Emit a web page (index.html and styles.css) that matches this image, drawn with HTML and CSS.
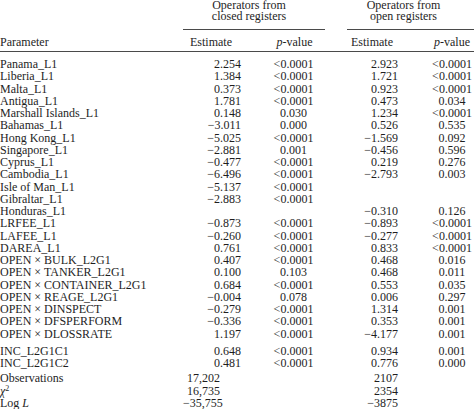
FILE: index.html
```html
<!DOCTYPE html>
<html>
<head>
<meta charset="utf-8">
<link rel="stylesheet" href="styles.css">
</head>
<body>
<table class="tbl">
  <colgroup>
    <col class="c-param"><col class="c-est1"><col class="c-p1"><col class="c-gap"><col class="c-est2"><col class="c-p2">
  </colgroup>
  <thead>
    <tr class="grp">
      <th></th>
      <th colspan="2" class="grp1">Operators from<br>closed registers</th>
      <th></th>
      <th colspan="2" class="grp2">Operators from<br>open registers</th>
    </tr>
    <tr class="sub">
      <th class="param">Parameter</th>
      <th class="h-e1">Estimate</th>
      <th class="h-p1"><i>p</i>-value</th>
      <th></th>
      <th class="h-e2">Estimate</th>
      <th class="h-p2"><i>p</i>-value</th>
    </tr>
  </thead>
  <tbody class="main">
    <tr class="first"><td>Panama_L1</td><td class="e1">2.254</td><td class="p1">&lt;0.0001</td><td></td><td class="e2">2.923</td><td class="p2">&lt;0.0001</td></tr>
    <tr><td>Liberia_L1</td><td class="e1">1.384</td><td class="p1">&lt;0.0001</td><td></td><td class="e2">1.721</td><td class="p2">&lt;0.0001</td></tr>
    <tr><td>Malta_L1</td><td class="e1">0.373</td><td class="p1">&lt;0.0001</td><td></td><td class="e2">0.923</td><td class="p2">&lt;0.0001</td></tr>
    <tr><td>Antigua_L1</td><td class="e1">1.781</td><td class="p1">&lt;0.0001</td><td></td><td class="e2">0.473</td><td class="p2">0.034</td></tr>
    <tr><td>Marshall Islands_L1</td><td class="e1">0.148</td><td class="p1">0.030</td><td></td><td class="e2">1.234</td><td class="p2">&lt;0.0001</td></tr>
    <tr><td>Bahamas_L1</td><td class="e1">−3.011</td><td class="p1">0.000</td><td></td><td class="e2">0.526</td><td class="p2">0.535</td></tr>
    <tr><td>Hong Kong_L1</td><td class="e1">−5.025</td><td class="p1">&lt;0.0001</td><td></td><td class="e2">−1.569</td><td class="p2">0.092</td></tr>
    <tr><td>Singapore_L1</td><td class="e1">−2.881</td><td class="p1">0.001</td><td></td><td class="e2">−0.456</td><td class="p2">0.596</td></tr>
    <tr><td>Cyprus_L1</td><td class="e1">−0.477</td><td class="p1">&lt;0.0001</td><td></td><td class="e2">0.219</td><td class="p2">0.276</td></tr>
    <tr><td>Cambodia_L1</td><td class="e1">−6.496</td><td class="p1">&lt;0.0001</td><td></td><td class="e2">−2.793</td><td class="p2">0.003</td></tr>
    <tr><td>Isle of Man_L1</td><td class="e1">−5.137</td><td class="p1">&lt;0.0001</td><td></td><td class="e2"></td><td class="p2"></td></tr>
    <tr><td>Gibraltar_L1</td><td class="e1">−2.883</td><td class="p1">&lt;0.0001</td><td></td><td class="e2"></td><td class="p2"></td></tr>
    <tr><td>Honduras_L1</td><td class="e1"></td><td class="p1"></td><td></td><td class="e2">−0.310</td><td class="p2">0.126</td></tr>
    <tr><td>LRFEE_L1</td><td class="e1">−0.873</td><td class="p1">&lt;0.0001</td><td></td><td class="e2">−0.893</td><td class="p2">&lt;0.0001</td></tr>
    <tr><td>LAFEE_L1</td><td class="e1">−0.260</td><td class="p1">&lt;0.0001</td><td></td><td class="e2">−0.277</td><td class="p2">&lt;0.0001</td></tr>
    <tr><td>DAREA_L1</td><td class="e1">0.761</td><td class="p1">&lt;0.0001</td><td></td><td class="e2">0.833</td><td class="p2">&lt;0.0001</td></tr>
    <tr><td>OPEN × BULK_L2G1</td><td class="e1">0.407</td><td class="p1">&lt;0.0001</td><td></td><td class="e2">0.468</td><td class="p2">0.016</td></tr>
    <tr><td>OPEN × TANKER_L2G1</td><td class="e1">0.100</td><td class="p1">0.103</td><td></td><td class="e2">0.468</td><td class="p2">0.011</td></tr>
    <tr><td>OPEN × CONTAINER_L2G1</td><td class="e1">0.684</td><td class="p1">&lt;0.0001</td><td></td><td class="e2">0.553</td><td class="p2">0.035</td></tr>
    <tr><td>OPEN × REAGE_L2G1</td><td class="e1">−0.004</td><td class="p1">0.078</td><td></td><td class="e2">0.006</td><td class="p2">0.297</td></tr>
    <tr><td>OPEN × DINSPECT</td><td class="e1">−0.279</td><td class="p1">&lt;0.0001</td><td></td><td class="e2">1.314</td><td class="p2">0.001</td></tr>
    <tr><td>OPEN × DFSPERFORM</td><td class="e1">−0.336</td><td class="p1">&lt;0.0001</td><td></td><td class="e2">0.353</td><td class="p2">0.001</td></tr>
    <tr><td>OPEN × DLOSSRATE</td><td class="e1">1.197</td><td class="p1">&lt;0.0001</td><td></td><td class="e2">−4.177</td><td class="p2">0.001</td></tr>
    <tr class="inc"><td>INC_L2G1C1</td><td class="e1">0.648</td><td class="p1">&lt;0.0001</td><td></td><td class="e2">0.934</td><td class="p2">0.001</td></tr>
    <tr><td>INC_L2G1C2</td><td class="e1">0.481</td><td class="p1">&lt;0.0001</td><td></td><td class="e2">0.776</td><td class="p2">0.000</td></tr>
    <tr class="obs"><td>Observations</td><td class="s1">17,202</td><td></td><td></td><td class="e2">2107</td><td></td></tr>
    <tr><td><i>χ</i><sup class="sq">2</sup></td><td class="s1">16,735</td><td></td><td></td><td class="e2">2354</td><td></td></tr>
    <tr><td>Log <i>L</i></td><td class="s1">−35,755</td><td></td><td></td><td class="e2">−3875</td><td></td></tr>
  </tbody>
</table>
</body>
</html>
```

FILE: styles.css
```css
html, body {
  margin: 0;
  padding: 0;
  background: #ffffff;
}

body {
  font-family: "Liberation Serif", "Times New Roman", serif;
  font-size: 12px;
  color: #1e1e1e;
  overflow: hidden;
}

.tbl {
  width: 474px;
  table-layout: fixed;
  border-collapse: collapse;
  border-spacing: 0;
}

.c-param { width: 183px; }
.c-est1 { width: 79px; }
.c-p1 { width: 63px; }
.c-gap { width: 22px; }
.c-est2 { width: 83px; }
.c-p2 { width: 44px; }

.tbl th,
.tbl td {
  padding: 0;
  font-weight: normal;
  white-space: nowrap;
  line-height: 12.25px;
}

.grp th {
  line-height: 11px;
  padding-bottom: 7px;
  text-align: center;
  vertical-align: top;
}

.grp .grp1 {
  padding-right: 10px;
  border-bottom: 1px solid #4a4a4a;
}

.grp .grp2 {
  padding-right: 14px;
  border-bottom: 1px solid #4a4a4a;
}

.sub th {
  line-height: 12px;
  padding-top: 6px;
  padding-bottom: 3px;
  border-bottom: 1px solid #4a4a4a;
}

.sub .param { text-align: left; }
.sub .h-e1 { text-align: right; padding-right: 30px; }
.sub .h-p1 { text-align: center; padding-left: 2px; }
.sub .h-e2 { text-align: right; padding-right: 37px; }
.sub .h-p2 { text-align: center; }

.main td { text-align: left; }
.main .e1 { text-align: right; padding-right: 21px; }
.main .p1 { text-align: center; }
.main .e2 { text-align: right; padding-right: 32px; }
.main .p2 { text-align: center; }
.main .s1 { text-align: right; padding-right: 42px; }

.main .first td { padding-top: 6px; }
.main .inc td { padding-top: 5px; }
.main .obs td { padding-top: 3px; }

.sq {
  font-size: 8px;
  line-height: 0;
  vertical-align: 4px;
}
```
